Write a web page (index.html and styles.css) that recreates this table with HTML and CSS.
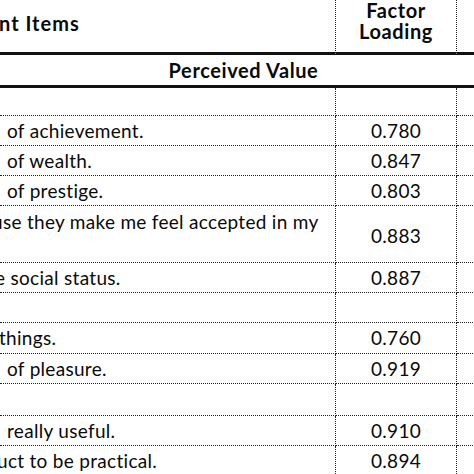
FILE: index.html
```html
<!DOCTYPE html>
<html>
<head>
<meta charset="utf-8">
<link rel="stylesheet" href="styles.css">
</head>
<body>
<div class="sheet">
  <div class="cell c1 head"><span class="hitem">nt Items</span></div>
  <div class="cell c2 head"><span class="hfactor">Factor<br>Loading</span></div>
  <div class="cell c3 head"></div>

  <div class="cell span group">Perceived Value</div>

  <div class="cell c1 sub"></div><div class="cell c2 sub"></div><div class="cell c3 sub"></div>

  <div class="cell c1 r30"><span class="t in7">of achievement.</span></div><div class="cell c2 r30 num">0.780</div><div class="cell c3 r30"></div>
  <div class="cell c1 r30"><span class="t in7">of wealth.</span></div><div class="cell c2 r30 num">0.847</div><div class="cell c3 r30"></div>
  <div class="cell c1 r30"><span class="t in7">of prestige.</span></div><div class="cell c2 r30 num">0.803</div><div class="cell c3 r30"></div>
  <div class="cell c1 r57 top"><span class="t cut-u">use they make me feel accepted in my</span></div><div class="cell c2 r57 num low">0.883</div><div class="cell c3 r57"></div>
  <div class="cell c1 r30"><span class="t cut-e">e social status.</span></div><div class="cell c2 r30 num">0.887</div><div class="cell c3 r30"></div>
  <div class="cell c1 r30"></div><div class="cell c2 r30"></div><div class="cell c3 r30"></div>
  <div class="cell c1 r31"><span class="t cut-t">things.</span></div><div class="cell c2 r31 num">0.760</div><div class="cell c3 r31"></div>
  <div class="cell c1 r30"><span class="t in7">of pleasure.</span></div><div class="cell c2 r30 num">0.919</div><div class="cell c3 r30"></div>
  <div class="cell c1 r32"></div><div class="cell c2 r32"></div><div class="cell c3 r32"></div>
  <div class="cell c1 r30"><span class="t in7">really useful.</span></div><div class="cell c2 r30 num">0.910</div><div class="cell c3 r30"></div>
  <div class="cell c1 r30"><span class="t cut-uc">uct to be practical.</span></div><div class="cell c2 r30 num">0.894</div><div class="cell c3 r30"></div>
</div>
</body>
</html>
```
FILE: styles.css
```css
html, body {
  margin: 0;
  padding: 0;
  background: #fff;
  overflow: hidden;
}
body {
  width: 474px;
  height: 474px;
  font-family: Lato, "Liberation Sans", sans-serif;
  font-size: 19px;
  letter-spacing: 0.3px;
  line-height: 22px;
  color: #0a0a0a;
}
.sheet {
  display: grid;
  grid-template-columns: 336px 121px 40px;
  width: 497px;
}
.cell {
  box-sizing: border-box;
  border-bottom: 1px dotted #222;
  display: flex;
  align-items: center;
  white-space: nowrap;
  overflow: visible;
}
.c1, .c2 {
  border-right: 1px dotted #222;
}
.num {
  justify-content: center;
}
.num.low { padding-top: 3px; }
.head {
  height: 55px;
  border-bottom: 3px solid #111;
  font-weight: 700;
  font-size: 20px;
  letter-spacing: 0.6px;
  line-height: 21px;
  align-items: flex-start;
}
.hitem {
  margin-top: 13px;
  margin-left: -1px;
  letter-spacing: 1px;
}
.c2.head {
  justify-content: center;
  text-align: center;
}
.hfactor {
  margin-top: 0;
}
.span {
  grid-column: 1 / -1;
}
.group {
  height: 33px;
  border-bottom: 3px solid #111;
  border-right: none;
  justify-content: center;
  align-items: flex-start;
  font-weight: 700;
  font-size: 20px;
  letter-spacing: 0.6px;
  padding-right: 10px;
  padding-top: 4px;
}
.sub { height: 28px; }
.r30 { height: 30px; }
.r31 { height: 31px; }
.r32 { height: 32px; }
.r57 { height: 57px; }
.top { align-items: flex-start; padding-top: 5px; }
.t { display: block; }
.in7 { margin-left: 7px; }
.cut-u { margin-left: -8px; }
.cut-e { margin-left: -5px; }
.cut-t { margin-left: -1px; }
.cut-uc { margin-left: -3px; }
```
